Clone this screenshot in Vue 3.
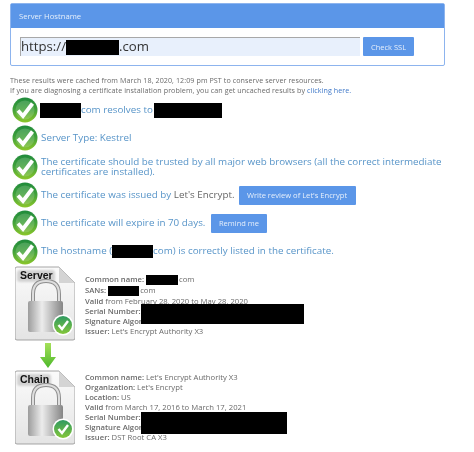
<script setup>
const serverLines = [
  { label: 'Common name:', redact: 32, text: 'com' },
  { label: 'SANs:', redact: 31, text: 'com' },
  { label: 'Valid', text: ' from February 28, 2020 to May 28, 2020' },
  { label: 'Serial Number:' },
  { label: 'Signature Algorithm:' },
  { label: 'Issuer:', text: " Let's Encrypt Authority X3" },
]
const chainLines = [
  { label: 'Common name:', text: " Let's Encrypt Authority X3" },
  { label: 'Organization:', text: " Let's Encrypt" },
  { label: 'Location:', text: ' US' },
  { label: 'Valid', text: ' from March 17, 2016 to March 17, 2021' },
  { label: 'Serial Number:' },
  { label: 'Signature Algorithm:' },
  { label: 'Issuer:', text: ' DST Root CA X3' },
]
</script>

<template>
  <div class="page">
    <section class="panel">
      <header class="panel-head">Server Hostname</header>
      <div class="panel-body">
        <div class="host-input">https://<span class="redact host-redact"></span>.com</div>
        <button class="btn check-btn">Check SSL</button>
      </div>
    </section>

    <div class="notice">
      <p>These results were cached from March 18, 2020, 12:09 pm PST to conserve server resources.</p>
      <p>If you are diagnosing a certificate installation problem, you can get uncached results by <a class="link">clicking here.</a></p>
    </div>

    <ul class="checks">
      <li v-for="n in 6" :key="n" class="check">
        <svg class="tick" viewBox="0 0 26 26">
          <defs>
            <linearGradient :id="'g' + n" x1="0" y1="0" x2="0" y2="1">
              <stop offset="0" stop-color="#1f8a3c" />
              <stop offset="0.5" stop-color="#43a33a" />
              <stop offset="1" stop-color="#8cc72a" />
            </linearGradient>
          </defs>
          <circle cx="13" cy="13" r="12.5" :fill="'url(#g' + n + ')'" />
          <circle cx="13" cy="13" r="9.5" fill="#fff" opacity="0.16" />
          <path d="M6 13.5 L11 19 L20.5 6.5" fill="none" stroke="#fff" stroke-width="3.8" stroke-linejoin="miter" />
        </svg>
        <div v-if="n === 1" class="check-text">
          <span class="redact r-res-a"></span>com resolves to<span class="redact r-res-b"></span>
        </div>
        <div v-else-if="n === 2" class="check-text">Server Type: Kestrel</div>
        <div v-else-if="n === 3" class="check-text tight">The certificate should be trusted by all major web browsers (all the correct intermediate certificates are installed).</div>
        <div v-else-if="n === 4" class="check-text">
          The certificate was issued by <span class="dark">Let's Encrypt.</span>
          <button class="btn review-btn">Write review of Let's Encrypt</button>
        </div>
        <div v-else-if="n === 5" class="check-text">
          The certificate will expire in 70 days.
          <button class="btn remind-btn">Remind me</button>
        </div>
        <div v-else class="check-text">
          The hostname (<span class="redact r-host"></span>com) is correctly listed in the certificate.
        </div>
      </li>
    </ul>

    <div class="cert">
      <svg class="cert-icon" viewBox="0 0 60 75">
        <defs>
          <linearGradient id="paper1" x1="0" y1="0" x2="0" y2="1"><stop offset="0" stop-color="#fbfbfb" /><stop offset="1" stop-color="#e4e4e4" /></linearGradient>
          <linearGradient id="body1" x1="0" y1="0" x2="1" y2="0"><stop offset="0" stop-color="#9c9c9c" /><stop offset="0.4" stop-color="#ececec" /><stop offset="1" stop-color="#858585" /></linearGradient>
          <linearGradient id="badge1" x1="0" y1="0" x2="0" y2="1"><stop offset="0" stop-color="#2f9a62" /><stop offset="1" stop-color="#84c63a" /></linearGradient>
          <filter id="soft" x="-20%" y="-20%" width="140%" height="140%"><feGaussianBlur stdDeviation="1.2" /></filter>
        </defs>
        <path d="M2 1 H44 L60 17 V72 Q60 74 58 74 H2 Q0 74 0 72 V3 Q0 1 2 1 Z" fill="url(#paper1)" stroke="#8f8f8f" stroke-width="0.8" />
        <path d="M44 1 V17 H60 Z" fill="#d4d4d4" />
        <rect x="2" y="4" width="38" height="12" rx="3" fill="#d2d2d2" filter="url(#soft)" />
        <path d="M18 36 V28 Q18 15 31 15 Q44 15 44 28 V36" fill="none" stroke="#8e8e8e" stroke-width="4" />
        <path d="M18 36 V28 Q18 15 31 15 Q44 15 44 28 V36" fill="none" stroke="#dedede" stroke-width="2" />
        <rect x="13" y="35" width="35" height="31" rx="2" fill="url(#body1)" />
        <circle cx="48" cy="59" r="10.5" fill="#fff" />
        <circle cx="48" cy="59" r="9" fill="url(#badge1)" />
        <path d="M43.5 59 L47 63 L53 55" fill="none" stroke="#fff" stroke-width="2.4" />
      </svg>
      <span class="cert-label">Server</span>
      <div class="cert-info">
        <div v-for="(l, i) in serverLines" :key="i" class="info-line">
          <b>{{ l.label }}</b><span v-if="l.redact" class="redact" :style="{ width: l.redact + 'px' }"></span><span v-if="l.redact" class="gap"></span>{{ l.text }}
        </div>
        <span class="redact serial-server"></span>
      </div>
    </div>

    <svg class="arrow" viewBox="0 0 16 25">
      <defs>
        <linearGradient id="arr" x1="0" y1="0" x2="0" y2="1"><stop offset="0" stop-color="#a6e05a" /><stop offset="1" stop-color="#4cb82a" /></linearGradient>
      </defs>
      <path d="M5 0 H11 V14 H16 L8 25 L0 14 H5 Z" fill="url(#arr)" />
    </svg>

    <div class="cert chain">
      <svg class="cert-icon" viewBox="0 0 60 75">
        <path d="M2 1 H44 L60 17 V72 Q60 74 58 74 H2 Q0 74 0 72 V3 Q0 1 2 1 Z" fill="url(#paper1)" stroke="#8f8f8f" stroke-width="0.8" />
        <path d="M44 1 V17 H60 Z" fill="#d4d4d4" />
        <rect x="2" y="4" width="34" height="12" rx="3" fill="#d2d2d2" filter="url(#soft)" />
        <path d="M18 36 V28 Q18 15 31 15 Q44 15 44 28 V36" fill="none" stroke="#8e8e8e" stroke-width="4" />
        <path d="M18 36 V28 Q18 15 31 15 Q44 15 44 28 V36" fill="none" stroke="#dedede" stroke-width="2" />
        <rect x="13" y="35" width="35" height="31" rx="2" fill="url(#body1)" />
        <circle cx="48" cy="59" r="10.5" fill="#fff" />
        <circle cx="48" cy="59" r="9" fill="url(#badge1)" />
        <path d="M43.5 59 L47 63 L53 55" fill="none" stroke="#fff" stroke-width="2.4" />
      </svg>
      <span class="cert-label">Chain</span>
      <div class="cert-info">
        <div v-for="(l, i) in chainLines" :key="i" class="info-line">
          <b>{{ l.label }}</b>{{ l.text }}
        </div>
        <span class="redact serial-chain"></span>
      </div>
    </div>
  </div>
</template>

<style>
html, body { margin: 0; background: #fff; }
</style>

<style scoped>
.page {
  width: 474px;
  height: 452px;
  box-sizing: border-box;
  padding: 3px 0 0 10px;
  overflow: hidden;
  font-family: "Open Sans", sans-serif;
  color: #6a6a6a;
  filter: blur(0.3px);
}
.panel {
  width: 435px;
  height: 63px;
  box-sizing: border-box;
  border: 1px solid #8db4ee;
  border-radius: 2px;
}
.panel-head {
  height: 24px;
  background: #5b96e8;
  color: #e6effb;
  font-size: 7.7px;
  line-height: 24px;
  padding-left: 8px;
}
.panel-body {
  display: flex;
  align-items: center;
  gap: 3px;
  padding: 9px 0 0 9px;
}
.host-input {
  width: 340px;
  height: 19px;
  background: #e8f0fc;
  border-top: 1px solid #a8a8a8;
  border-left: 1px solid #a8a8a8;
  box-sizing: border-box;
  font-size: 13.2px;
  line-height: 17px;
  color: #333;
}
.redact {
  display: inline-block;
  background: #000;
  vertical-align: middle;
}
.host-redact { width: 53px; height: 15px; margin-top: 1px; }
.btn {
  border: 0;
  padding: 0;
  margin: 0;
  background: #5b96e8;
  color: #e6effb;
  font-family: inherit;
  border-radius: 1px;
  font-size: 7.5px;
}
.check-btn { width: 51px; height: 19px; }
.notice {
  margin-top: 9px;
  font-size: 7.15px;
  line-height: 10px;
  white-space: nowrap;
  letter-spacing: 0.01em;
}
.notice p { margin: 0; }
.link { color: #3f78c8; }
.checks {
  list-style: none;
  margin: 1px 0 0 2px;
  padding: 0;
}
.check {
  display: flex;
  align-items: center;
  gap: 3px;
  height: 28.3px;
}
.tick {
  width: 26px;
  height: 26px;
  flex: none;
}
.check-text {
  font-size: 9.82px;
  font-weight: 500;
  color: #5794c8;
  line-height: 10px;
  white-space: nowrap;
  width: 410px;
}
.check-text.tight { white-space: normal; }
.dark { color: #666; }
.r-res-a { width: 41px; height: 15px; margin-left: -1px; }
.r-res-b { width: 68px; height: 15px; margin-left: 1px; }
.r-host { width: 41px; height: 13px; }
.review-btn { width: 117px; height: 19px; margin-left: 4px; font-size: 7.6px; vertical-align: middle; }
.remind-btn { width: 56px; height: 19px; margin-left: 3px; vertical-align: middle; }
.cert {
  position: relative;
  display: flex;
  gap: 10px;
  margin: 0 0 0 5px;
}
.cert-icon { width: 60px; height: 75px; flex: none; }
.cert-label {
  position: absolute;
  left: 5px;
  top: 3px;
  font-family: "Liberation Sans", sans-serif;
  font-weight: 700;
  font-size: 10.5px;
  line-height: 12px;
  color: #111;
}
.cert-info {
  position: relative;
  padding-top: 8px;
  font-size: 7.7px;
  line-height: 10px;
  white-space: nowrap;
}
.chain .cert-info { padding-top: 2px; }
.info-line b { font-weight: 600; }
.info-line .redact { height: 10px; margin-left: 2px; }
.gap { display: inline-block; width: 1px; }
.serial-server { position: absolute; left: 56px; top: 38px; width: 163px; height: 20px; }
.serial-chain { position: absolute; left: 56px; top: 42px; width: 146px; height: 22px; }
.arrow { display: block; width: 16px; height: 25px; margin: 2px 0 0 30px; }
.chain { margin-top: 2px; }
</style>
